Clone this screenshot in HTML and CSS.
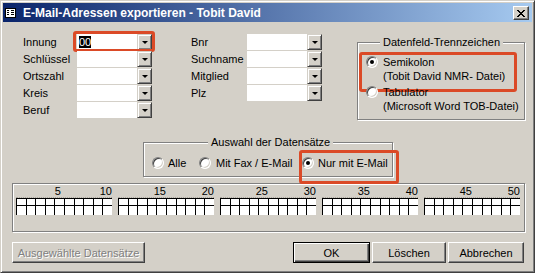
FILE: index.html
```html
<!DOCTYPE html>
<html lang="de">
<head>
  <meta charset="UTF-8">
  <title>E-Mail-Adressen exportieren - Tobit David</title>
  <link rel="stylesheet" href="styles.css">
</head>
<body>
  <div class="window">
    <div class="titlebar">
      <svg class="app-icon" width="11" height="10" viewBox="0 0 11 10">
        <rect x="0.5" y="0.5" width="10" height="9" fill="#fff" stroke="#000"/>
        <path d="M2 2.5h2M2 4.5h2M2 6.5h2M6 2.5h3M6 4.5h3M6 6.5h3" stroke="#000"/>
      </svg>
      <span class="title">E-Mail-Adressen exportieren - Tobit David</span>
      <div class="close-btn">
        <svg width="8" height="7" viewBox="0 0 8 7">
          <path d="M0 0L7 7M1 0L8 7M7 0L0 7M8 0L1 7" stroke="#000" stroke-width="1"/>
        </svg>
      </div>
    </div>

    <div class="content">
      <div class="top">
        <div class="fields">
          <div class="field-col">
            <span class="label">Innung</span>
            <div class="combo marked"><span class="value"><span class="sel">00</span></span><span class="drop"></span></div>
            <span class="label">Schlüssel</span>
            <div class="combo"><span class="value"></span><span class="drop"></span></div>
            <span class="label">Ortszahl</span>
            <div class="combo"><span class="value"></span><span class="drop"></span></div>
            <span class="label">Kreis</span>
            <div class="combo"><span class="value"></span><span class="drop"></span></div>
            <span class="label">Beruf</span>
            <div class="combo"><span class="value"></span><span class="drop"></span></div>
          </div>
          <div class="field-col right">
            <span class="label">Bnr</span>
            <div class="combo"><span class="value"></span><span class="drop"></span></div>
            <span class="label">Suchname</span>
            <div class="combo"><span class="value"></span><span class="drop"></span></div>
            <span class="label">Mitglied</span>
            <div class="combo"><span class="value"></span><span class="drop"></span></div>
            <span class="label">Plz</span>
            <div class="combo"><span class="value"></span><span class="drop"></span></div>
          </div>
        </div>

        <div class="group separator-group">
          <span class="legend">Datenfeld-Trennzeichen</span>
          <div class="radio semi-mark">
            <span class="dot on"></span>
            <span>Semikolon<br>(Tobit David NMR- Datei)</span>
          </div>
          <div class="radio">
            <span class="dot"></span>
            <span>Tabulator<br>(Microsoft Word TOB-Datei)</span>
          </div>
        </div>
      </div>

      <div class="group selection-group">
        <span class="legend">Auswahl der Datensätze</span>
        <div class="radio all"><span class="dot"></span><span>Alle</span></div>
        <div class="radio fax"><span class="dot"></span><span>Mit Fax / E-Mail</span></div>
        <div class="radio mail-mark"><span class="dot on"></span><span>Nur mit E-Mail</span></div>
      </div>

      <div class="ruler">
        <div class="block">
          <div class="nums"><span class="n5">5</span><span class="n10">10</span></div>
          <div class="cells top-row"><i></i><i></i><i></i><i></i><i></i><i></i><i></i><i></i><i></i><i></i></div>
          <div class="cells bottom-row"><i></i><i></i><i></i><i></i><i></i><i></i><i></i><i></i><i></i><i></i></div>
        </div>
        <div class="block">
          <div class="nums"><span class="n5">15</span><span class="n10">20</span></div>
          <div class="cells top-row"><i></i><i></i><i></i><i></i><i></i><i></i><i></i><i></i><i></i><i></i></div>
          <div class="cells bottom-row"><i></i><i></i><i></i><i></i><i></i><i></i><i></i><i></i><i></i><i></i></div>
        </div>
        <div class="block">
          <div class="nums"><span class="n5">25</span><span class="n10">30</span></div>
          <div class="cells top-row"><i></i><i></i><i></i><i></i><i></i><i></i><i></i><i></i><i></i><i></i></div>
          <div class="cells bottom-row"><i></i><i></i><i></i><i></i><i></i><i></i><i></i><i></i><i></i><i></i></div>
        </div>
        <div class="block">
          <div class="nums"><span class="n5">35</span><span class="n10">40</span></div>
          <div class="cells top-row"><i></i><i></i><i></i><i></i><i></i><i></i><i></i><i></i><i></i><i></i></div>
          <div class="cells bottom-row"><i></i><i></i><i></i><i></i><i></i><i></i><i></i><i></i><i></i><i></i></div>
        </div>
        <div class="block">
          <div class="nums"><span class="n5">45</span><span class="n10">50</span></div>
          <div class="cells top-row"><i></i><i></i><i></i><i></i><i></i><i></i><i></i><i></i><i></i><i></i></div>
          <div class="cells bottom-row"><i></i><i></i><i></i><i></i><i></i><i></i><i></i><i></i><i></i><i></i></div>
        </div>
      </div>

      <div class="actions">
        <button class="btn wide" disabled>Ausgewählte Datensätze</button>
        <button class="btn default ok">OK</button>
        <button class="btn clear">Löschen</button>
        <button class="btn cancel">Abbrechen</button>
      </div>
    </div>
  </div>
</body>
</html>
```

FILE: styles.css
```css
* {
  margin:0;
  padding:0;
  box-sizing:border-box;
}

body {
  background:#d4d0c8;
  font-family:"Liberation Sans", Arial, sans-serif;
  font-size:11px;
  color:#000;
}

.window {
  width:535px;
  height:273px;
  display:flex;
  flex-direction:column;
  padding:2px;
  background:#d4d0c8;
  border:1px solid;
  border-color:#d4d0c8 #404040 #404040 #d4d0c8;
  box-shadow:inset 1px 1px #fff, inset -1px -1px #808080;
}

/* title bar */
.titlebar {
  height:19px;
  display:flex;
  align-items:center;
  background:linear-gradient(to right, #0a246a, #a6caf0);
  color:#fff;
}

.app-icon {
  margin-left:2px;
  margin-top:1px;
  flex:none;
}

.title {
  margin-left:7px;
  font-weight:bold;
  font-size:12px;
}

.close-btn {
  margin-left:auto;
  margin-right:3px;
  margin-top:1px;
  width:16px;
  height:14px;
  display:flex;
  align-items:center;
  justify-content:center;
  background:#d4d0c8;
  border:1px solid;
  border-color:#fff #404040 #404040 #fff;
  box-shadow:inset -1px -1px #808080;
}

/* content */
.content {
  flex:1;
  padding:12px 7px 0 9px;
}

.top {
  display:flex;
  align-items:flex-start;
}

.fields {
  display:flex;
  gap:39px;
  margin-left:11px;
}

.field-col {
  display:grid;
  grid-template-columns:54px 75px;
  grid-auto-rows:16px;
  row-gap:1px;
  align-items:center;
}

.field-col.right {
  grid-template-columns:56px 75px;
}

.label {
  line-height:16px;
  white-space:nowrap;
}

.combo {
  position:relative;
  height:16px;
  display:flex;
  background:#fff;
}

.combo .value {
  flex:1;
}

.sel {
  display:inline-block;
  margin:2px 0 0 2px;
  height:12px;
  line-height:12px;
  background:#000;
  color:#fff;
}

.drop {
  width:15px;
  height:16px;
  display:flex;
  align-items:center;
  justify-content:center;
  background:#d4d0c8;
  border:1px solid;
  border-color:#d4d0c8 #404040 #404040 #d4d0c8;
  box-shadow:inset 1px 1px #fff, inset -1px -1px #808080;
}

.drop::after {
  content:"";
  border-left:3px solid transparent;
  border-right:3px solid transparent;
  border-top:3px solid #000;
}

.marked::after,
.semi-mark::after,
.mail-mark::after {
  content:"";
  position:absolute;
  border:3px solid #db4a27;
  border-radius:3px;
  pointer-events:none;
}

.marked::after {
  left:-4px;
  top:-3px;
  right:-3px;
  bottom:-2px;
}

/* group boxes */
.group {
  position:relative;
  border:1px solid #808080;
  box-shadow:inset 1px 1px #fff, 1px 1px #fff;
}

.legend {
  position:absolute;
  top:-7px;
  line-height:13px;
  padding:0 3px;
  background:#d4d0c8;
  white-space:nowrap;
}

.separator-group {
  margin-left:35px;
  margin-top:8px;
  width:168px;
  height:78px;
  padding:12px 0 0 8px;
  display:flex;
  flex-direction:column;
  gap:2px;
}

.separator-group .legend {
  left:22px;
}

.radio {
  position:relative;
  display:flex;
  align-items:flex-start;
  gap:5px;
  line-height:14px;
  white-space:nowrap;
}

.dot {
  position:relative;
  flex:none;
  width:12px;
  height:12px;
  margin-top:1px;
  border-radius:50%;
  background:#fff;
  border:1px solid;
  border-color:#808080 #fff #fff #808080;
  box-shadow:inset 1px 1px #404040, inset -1px -1px #d4d0c8;
}

.dot.on::after {
  content:"";
  position:absolute;
  left:3px;
  top:3px;
  width:4px;
  height:4px;
  border-radius:50%;
  background:#000;
}

.semi-mark::after {
  left:-7px;
  top:-3px;
  width:152px;
  height:34px;
}

.selection-group {
  margin-top:22px;
  margin-left:131px;
  width:250px;
  height:35px;
  padding:13px 0 0 8px;
  display:flex;
}

.selection-group .legend {
  left:64px;
}

.selection-group .radio {
  gap:4px;
  flex:none;
}

.radio.all {
  width:47px;
}

.radio.fax {
  width:103px;
  gap:5px;
}

.mail-mark::after {
  left:-3px;
  top:-6px;
  width:94px;
  height:28px;
}

/* character ruler */
.ruler {
  margin-top:6px;
  height:49px;
  padding:2px 0 0 3px;
  display:flex;
  gap:6px;
  border:1px solid #808080;
  box-shadow:inset 1px 1px #fff, 1px 1px #fff;
}

.block {
  width:96px;
}

.nums {
  height:12px;
  display:grid;
  grid-template-columns:repeat(10, 1fr);
  line-height:11px;
  border-bottom:1px dotted #aaa69e;
}

.nums span {
  display:flex;
  justify-content:center;
  white-space:nowrap;
}

.nums .n5 {
  grid-column:5;
}

.nums .n10 {
  grid-column:10;
}

.cells {
  display:grid;
  grid-template-columns:repeat(10, 1fr);
  background:#fff;
  border-top:1px solid #000;
}

.cells i {
  border-left:1px solid #000;
}

.top-row {
  height:7px;
}

.bottom-row {
  height:10px;
}

/* buttons */
.actions {
  margin-top:10px;
  margin-right:1px;
  display:flex;
  gap:2px;
}

.btn {
  height:21px;
  font-family:inherit;
  font-size:11px;
  color:#000;
  background:#d4d0c8;
  border:1px solid;
  border-color:#fff #404040 #404040 #fff;
  box-shadow:inset -1px -1px #808080, inset 1px 1px #d4d0c8;
}

.btn.wide {
  width:133px;
  margin-right:auto;
}

.btn:disabled {
  color:#808080;
  text-shadow:1px 1px #fff;
}

.btn.default {
  border-color:#000;
  box-shadow:inset 1px 1px #fff, inset -1px -1px #404040, inset -2px -2px #808080;
}

.btn.ok {
  width:77px;
}

.btn.clear {
  width:74px;
}

.btn.cancel {
  width:76px;
}
```
